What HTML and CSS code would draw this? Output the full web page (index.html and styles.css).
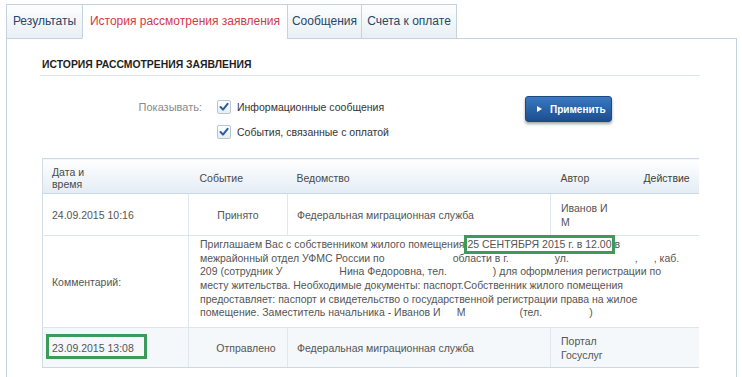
FILE: index.html
```html
<!DOCTYPE html>
<html lang="ru">
<head>
<meta charset="utf-8">
<title>История рассмотрения заявления</title>
<link rel="stylesheet" href="styles.css">
</head>
<body>
<div class="page">
  <ul class="tabs">
    <li class="tab t1">Результаты</li>
    <li class="tab t2 active">История рассмотрения заявления</li>
    <li class="tab t3">Сообщения</li>
    <li class="tab t4">Счета к оплате</li>
  </ul>
  <div class="panel">
    <h2 class="title">История рассмотрения заявления</h2>
    <div class="filter">
      <div class="show-label">Показывать:</div>
      <div class="checks">
        <label class="check"><span class="box"><svg viewBox="0 0 12 12" width="12" height="12"><polyline points="2.5,6 5,8.6 9.6,2.8" fill="none" stroke="#2b5e9e" stroke-width="2" stroke-linecap="round" stroke-linejoin="round"/></svg></span>Информационные сообщения</label>
        <label class="check"><span class="box"><svg viewBox="0 0 12 12" width="12" height="12"><polyline points="2.5,6 5,8.6 9.6,2.8" fill="none" stroke="#2b5e9e" stroke-width="2" stroke-linecap="round" stroke-linejoin="round"/></svg></span>События, связанные с оплатой</label>
      </div>
      <button class="apply" type="button"><span class="tri"></span>Применить</button>
    </div>
    <table class="history">
      <colgroup>
        <col class="c-date"><col class="c-event"><col class="c-dept"><col class="c-author"><col class="c-action">
      </colgroup>
      <thead>
        <tr>
          <th>Дата и<br>время</th>
          <th class="h-event">Событие</th>
          <th>Ведомство</th>
          <th class="h-author">Автор</th>
          <th class="h-action">Действие</th>
        </tr>
      </thead>
      <tbody>
        <tr class="r1">
          <td>24.09.2015 10:16</td>
          <td class="event">Принято</td>
          <td>Федеральная миграционная служба</td>
          <td class="author">Иванов И<br>М</td>
          <td class="action"></td>
        </tr>
        <tr class="r2">
          <td>Комментарий:</td>
          <td class="comment" colspan="4">Приглашаем Вас с собственником жилого помещения <span class="mark mark-day">25 СЕНТЯБРЯ 2015 г. в 12.00</span> в<br>межрайонный отдел УФМС России по<span class="gap g68"></span>области в г.<span class="gap g46"></span>ул.<span class="gap g66"></span>,<span class="gap g16"></span>, каб.<br>209 (сотрудник У<span class="gap g57"></span>Нина Федоровна, тел.<span class="gap g46"></span>) для оформления регистрации по<br>месту жительства. Необходимые документы: паспорт.Собственник жилого помещения<br>предоставляет: паспорт и свидетельство о государственной регистрации права на жилое<br>помещение. Заместитель начальника - Иванов И<span class="gap g16"></span>М<span class="gap g54"></span>(тел.<span class="gap g47"></span>)</td>
        </tr>
        <tr class="r3">
          <td><span class="mark mark-date">23.09.2015 13:08</span></td>
          <td class="event sent">Отправлено</td>
          <td>Федеральная миграционная служба</td>
          <td class="author">Портал<br>Госуслуг</td>
          <td class="action"></td>
        </tr>
      </tbody>
    </table>
  </div>
</div>
</body>
</html>
```
FILE: styles.css
```css
* { box-sizing: border-box; }

body {
  margin: 0;
  background: #ffffff;
  font-family: "Liberation Sans", Arial, sans-serif;
  font-size: 11px;
  color: #555555;
}

.page {
  padding: 4px 0 0 6px;
  width: 737px;
}

/* Tabs */
.tabs {
  display: flex;
  list-style: none;
  margin: 0 0 -1px 0;
  padding: 0;
  position: relative;
  z-index: 1;
}

.tab {
  height: 35px;
  line-height: 33px;
  border: 1px solid #c4d4de;
  margin-left: -1px;
  text-align: center;
  font-size: 12px;
  color: #26476a;
  background: linear-gradient(#fdfefe, #e8eff4);
  white-space: nowrap;
}

.tab:first-child { margin-left: 0; }
.t1 { width: 77px; }
.t2 { width: 206px; }
.t3 { width: 75px; }
.t4 { width: 96px; }

.tab.active {
  background: #ffffff;
  border-bottom-color: #ffffff;
  color: #d13a46;
}

/* Panel */
.panel {
  border: 1px solid #c4d4de;
  border-bottom: none;
  min-height: 345px;
  padding: 19px 36px 0 33px;
}

.title {
  margin: 0;
  padding: 0 0 3px 2px;
  font-size: 10.4px;
  line-height: 14px;
  font-weight: bold;
  text-transform: uppercase;
  color: #1e1e1e;
  border-bottom: 1px solid #dde4e8;
}

/* Filter */
.filter {
  display: flex;
  align-items: flex-start;
  margin-top: 20px;
}

.show-label {
  width: 162px;
  margin-right: 15px;
  padding-top: 4px;
  line-height: 14px;
  text-align: right;
  color: #8a8a8a;
}

.checks {
  width: 308px;
  padding-top: 4px;
  display: flex;
  flex-direction: column;
  gap: 11px;
}

.check {
  display: flex;
  align-items: center;
  height: 14px;
  line-height: 14px;
  font-size: 10.5px;
  color: #333333;
}

.box {
  width: 14px;
  height: 14px;
  margin-right: 6px;
  border: 1px solid #b9c5cf;
  border-radius: 2px;
  background: linear-gradient(#ffffff, #e8edf1);
  display: flex;
  align-items: center;
  justify-content: center;
}

.box svg { display: block; }

.apply {
  width: 87px;
  height: 26px;
  margin: 0;
  padding: 0 0 0 11px;
  display: flex;
  align-items: center;
  gap: 8px;
  border: 1px solid #1b4783;
  border-radius: 3px;
  background: linear-gradient(#3a79c1, #1c4e8e);
  box-shadow: 0 2px 3px rgba(0, 0, 0, 0.35);
  color: #ffffff;
  font-family: inherit;
  font-size: 10px;
  font-weight: bold;
}

.tri {
  width: 0;
  height: 0;
  border-left: 5px solid #ffffff;
  border-top: 3.5px solid transparent;
  border-bottom: 3.5px solid transparent;
}

/* Table */
.history {
  margin: 19px 0 0 2px;
  width: 656px;
  border-collapse: collapse;
  table-layout: fixed;
  border-left: 1px solid #d2dde5;
  font-size: 10.5px;
}

.c-date { width: 146px; }
.c-event { width: 99px; }
.c-dept { width: 263px; }
.c-author { width: 85px; }
.c-action { width: 63px; }

.history th {
  height: 35px;
  padding: 3px 9px 0;
  text-align: left;
  vertical-align: middle;
  font-weight: normal;
  line-height: 12px;
  color: #4a4a4a;
  background: linear-gradient(#ffffff, #e3ecf5);
  border-top: 1px solid #cfdbe4;
  border-bottom: 1px solid #c9d8e4;
}

.history th.h-event { padding-left: 11px; }
.history th.h-author { padding-left: 10px; }
.history th.h-action { padding-left: 8px; color: #3e3e3e; }

.history td {
  padding: 0 9px;
  line-height: 14px;
  vertical-align: middle;
  border-bottom: 1px solid #dee6eb;
}

.history td + td { border-left: 1px solid #e1e8ed; }
.history td.action { border-left: none; }

.history td.event { text-align: center; }
.history td.event.sent { padding-left: 25px; }
.history td.author { padding-left: 10px; }

.r1 td { height: 42px; }
.r2 td { height: 92px; }
.r3 td {
  height: 40px;
  background: #f4f8fb;
  border-bottom-color: #cdd9e2;
}

.history td.comment {
  padding: 2px 8px 7px 11px;
  line-height: 13.6px;
  white-space: nowrap;
}

.gap { display: inline-block; }
.g16 { width: 16px; }
.g46 { width: 46px; }
.g47 { width: 47px; }
.g54 { width: 54px; }
.g57 { width: 57px; }
.g66 { width: 66px; }
.g68 { width: 68px; }

/* Green annotation frames over text */
.mark { position: relative; }

.mark::after {
  content: "";
  position: absolute;
  border: 3px solid #3c9b58;
  pointer-events: none;
}

.mark-day::after { top: -3px; bottom: -4px; left: -3px; right: -3px; }
.mark-date::after { top: -8px; bottom: -5px; left: -6px; right: -13px; }
```
